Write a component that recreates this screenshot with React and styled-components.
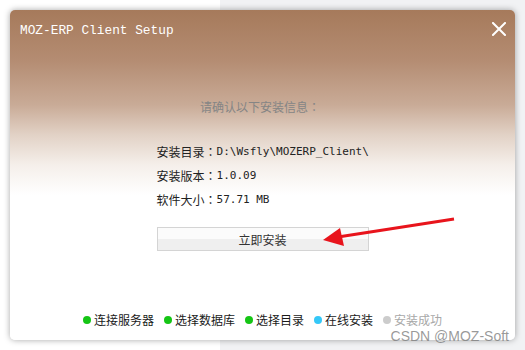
import styled, { createGlobalStyle } from 'styled-components';

const GlobalStyle = createGlobalStyle`
    html, body {
        margin: 0;
        padding: 0;
    }
    body {
        width: 525px;
        height: 350px;
        overflow: hidden;
        background: linear-gradient(to right, #ffffff 0, #ffffff 220px, #f1f2f4 220px);
        font-family: "Noto Sans CJK SC", "Noto Sans", sans-serif;
    }
`;

const steps = [
    { label: '连接服务器', state: 'done' },
    { label: '选择数据库', state: 'done' },
    { label: '选择目录', state: 'done' },
    { label: '在线安装', state: 'active' },
    { label: '安装成功', state: 'todo' },
];

const info = [
    { label: '安装目录：', value: 'D:\\Wsfly\\MOZERP_Client\\' },
    { label: '安装版本：', value: '1.0.09' },
    { label: '软件大小：', value: '57.71 MB' },
];

const App = () => {
    return (
        <Page>
            <GlobalStyle />
            <Window>
                <Header>
                    <Title>MOZ-ERP Client Setup</Title>
                    <CloseBtn>
                        <svg width="14" height="14" viewBox="0 0 14 14">
                            <path d="M1 1 L13 13 M13 1 L1 13" stroke="#fff" strokeWidth="2" strokeLinecap="square" />
                        </svg>
                    </CloseBtn>
                </Header>
                <Prompt>请确认以下安装信息：</Prompt>
                <Details>
                    {info.map(row => (
                        <InfoRow key={row.label}>
                            <Label>{row.label}</Label>
                            <Value>{row.value}</Value>
                        </InfoRow>
                    ))}
                    <InstallButton>立即安装</InstallButton>
                </Details>
                <Steps>
                    {steps.map(step => (
                        <Step key={step.label} $state={step.state}>
                            <Dot $state={step.state} />
                            {step.label}
                        </Step>
                    ))}
                </Steps>
            </Window>
            <Arrow width="525" height="350" viewBox="0 0 525 350">
                <line x1="454" y1="219" x2="338" y2="237" stroke="#e8141c" strokeWidth="3" />
                <polygon points="323,240 340,228 344,246" fill="#e8141c" />
            </Arrow>
            <Watermark>CSDN @MOZ-Soft</Watermark>
        </Page>
    )
}

const Page = styled.div`
    position: relative;
    width: 525px;
    height: 350px;
    padding: 10px;
    box-sizing: border-box;
`;

const Window = styled.div`
    width: 505px;
    height: 330px;
    border-radius: 5px;
    box-shadow: 0 0 6px rgba(0, 0, 0, 0.35);
    background: linear-gradient(to bottom, #a67a5b 0px, #b48c72 50px, #c9ab97 95px, #e2d2c6 125px, #f5efea 155px, #ffffff 185px);
    display: flex;
    flex-direction: column;
    box-sizing: border-box;
`;

const Header = styled.div`
    height: 40px;
    display: flex;
    align-items: center;
    justify-content: space-between;
    padding: 0 9px 0 10px;
`;

const Title = styled.div`
    font-family: "Liberation Mono", "DejaVu Sans Mono", monospace;
    font-size: 12.8px;
    color: #ffffff;
`;

const CloseBtn = styled.div`
    width: 14px;
    height: 14px;
    display: flex;
    margin-top: -2px;
`;

const Prompt = styled.div`
    margin-top: 49px;
    text-align: center;
    font-family: "Noto Sans CJK TC", "Noto Sans CJK SC", sans-serif;
    font-size: 12px;
    line-height: 16px;
    color: #858585;
    padding-right: 5px;
`;

const Details = styled.div`
    margin: 24px auto 0;
    width: 212px;
    display: flex;
    flex-direction: column;
`;

const InfoRow = styled.div`
    display: flex;
    align-items: center;
    height: 24px;
    white-space: nowrap;
    color: #222;
`;

const Label = styled.span`
    font-family: "Noto Sans CJK TC", "Noto Sans CJK SC", sans-serif;
    font-size: 12px;
`;

const Value = styled.span`
    font-family: "DejaVu Sans Mono", "Liberation Mono", monospace;
    font-size: 11px;
`;

const InstallButton = styled.div`
    margin-top: 16px;
    height: 24px;
    box-sizing: border-box;
    border: 1px solid #d4d4d4;
    background: linear-gradient(to bottom, #fbfbfb 0, #fbfbfb 50%, #efefef 50%, #efefef 100%);
    display: flex;
    align-items: center;
    justify-content: center;
    font-size: 12px;
    color: #333;
`;

const Steps = styled.div`
    margin-top: auto;
    padding-bottom: 12px;
    display: flex;
    justify-content: center;
    gap: 10px;
`;

const Step = styled.div`
    display: flex;
    align-items: center;
    gap: 3px;
    font-size: 12px;
    line-height: 16px;
    color: ${p => (p.$state === 'todo' ? '#a8a8a8' : '#1a1a1a')};
`;

const dotColors = { done: '#15c515', active: '#35c8f8', todo: '#cccccc' };

const Dot = styled.span`
    width: 8px;
    height: 8px;
    border-radius: 50%;
    background: ${p => dotColors[p.$state]};
`;

const Arrow = styled.svg`
    position: absolute;
    left: 0;
    top: 0;
    pointer-events: none;
`;

const Watermark = styled.div`
    position: absolute;
    right: 16px;
    bottom: 6px;
    font-family: "Liberation Sans", Arial, sans-serif;
    font-size: 14px;
    color: rgba(120, 120, 120, 0.75);
`;

export default App
